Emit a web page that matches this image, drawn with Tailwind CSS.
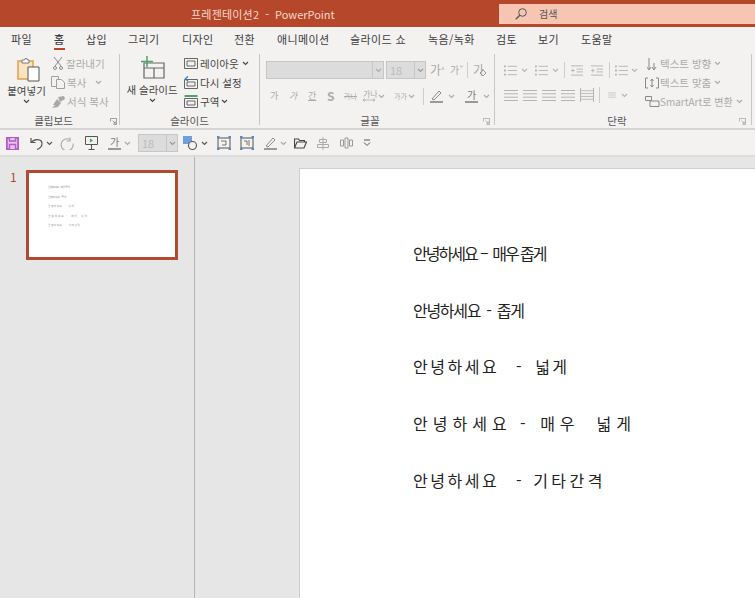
<!DOCTYPE html>
<html lang="ko">
<head>
    <meta charset="UTF-8">
    <title>프레젠테이션2 - PowerPoint</title>
    <script src="https://cdn.jsdelivr.net/npm/@tailwindcss/browser@4"></script>
</head>
<body class="w-[755px] h-[598px] overflow-hidden bg-[#e6e6e6] font-['Noto_Sans_CJK_KR','Noto_Sans',sans-serif] text-[11px] leading-[14px] text-[#444]">

    <!-- shared icons -->
    <svg class="hidden">
        <symbol id="chev" viewBox="0 0 7 5"><path d="M1 1l2.500 2.500L6 1" fill="none" stroke="currentColor" stroke-width="1.100"/></symbol>
        <symbol id="launch" viewBox="0 0 8 8"><path d="M.5 4V.5H7.500V7.500H4M3 3l3 3M6 4v2H4" fill="none" stroke="currentColor" stroke-width=".8"/></symbol>
        <symbol id="bullets" viewBox="0 0 14 13"><path d="M4 2h10M4 6.500h10M4 11h10" stroke="currentColor" fill="none"/><path d="M0 1h2v2H0zM0 5.500h2v2H0zM0 10h2v2H0z" fill="currentColor"/></symbol>
        <symbol id="lines" viewBox="0 0 14 11"><path d="M0 .5h14M0 3.800h14M0 7.200h14M0 10.500h14" stroke="currentColor" fill="none"/></symbol>
        <symbol id="indent" viewBox="0 0 13 11"><path d="M0 .5h13M6 4h7M6 7h7M0 10.500h13M0 5.500h4M2 3.500v4" stroke="currentColor" fill="none"/></symbol>
    </svg>

    <!-- title bar -->
    <div class="h-[27px] bg-[#b7472a] flex items-center">
        <div class="ml-[191px] w-[308px] text-[#f6d9cd] flex"><span class="tracking-[.2px]">프레젠테이션2</span><span class="ml-[6px]">-</span><span class="ml-[6px]">PowerPoint</span></div>
        <div class="w-[256px] h-[20px] bg-[#f6c6b3] flex items-center">
            <svg class="ml-[16px] w-[12px] h-[12px] text-[#555]" viewBox="0 0 12 12" fill="none" stroke="currentColor"><circle cx="7.500" cy="4.500" r="3.800"/><path d="M4.800 7.200L.8 11.200" stroke-width="1.300"/></svg>
            <span class="ml-[12px] text-[10px] text-[#555]">검색</span>
        </div>
    </div>

    <!-- tabs -->
    <div class="h-[27px] bg-[#f3f2f1] flex items-start pt-[5px] text-[#3d3d3d] tracking-[.4px]">
        <span class="ml-[11px] w-[43px]">파일</span>
        <span class="w-[32px] font-medium"><span class="inline-block w-[11px] h-[18px] border-b-2 border-[#b7472a]">홈</span></span>
        <span class="w-[42px]">삽입</span>
        <span class="w-[54px]">그리기</span>
        <span class="w-[52px]">디자인</span>
        <span class="w-[43px]">전환</span>
        <span class="w-[73px]">애니메이션</span>
        <span class="w-[78px]">슬라이드 쇼</span>
        <span class="w-[68px]">녹음/녹화</span>
        <span class="w-[42px]">검토</span>
        <span class="w-[43px]">보기</span>
        <span>도움말</span>
    </div>

    <!-- ribbon -->
    <div class="h-[74px] bg-[#f3f2f1] flex items-start">

        <!-- clipboard -->
        <div class="w-[119px] h-full flex flex-col">
            <div class="h-[60px] flex">
                <div class="w-[51px] flex flex-col items-center pl-[3px]">
                    <svg class="mt-[3px] ml-[2px] w-[23px] h-[25px]" viewBox="0 0 23 25"><path d="M1 4h15v18H1z" fill="#f9e3c4" stroke="#e2a04a" stroke-width="1.500"/><path d="M5 3h2.500a1.500 1.500 0 013 0H12v3H5z" fill="#fff" stroke="#777"/><path d="M11 10h11v14H11z" fill="#fff" stroke="#555"/></svg>
                    <span class="mt-[2px] -ml-[1px] whitespace-nowrap text-[10.500px]">붙여넣기</span>
                    <svg class="mt-[1px] -ml-[1px] w-[7px] h-[5px]"><use href="#chev"/></svg>
                </div>
                <div class="flex flex-col text-[#aaa] text-[10.500px]">
                    <div class="h-[19px] flex items-center">
                        <svg class="ml-[2px] w-[10px] h-[13px]" viewBox="0 0 10 13" fill="none" stroke="#8a8a8a"><path d="M1 0l7 9M9 0L2 9"/><circle cx="2" cy="11" r="1.500"/><circle cx="8" cy="11" r="1.500"/></svg>
                        <span class="ml-[3px]">잘라내기</span>
                    </div>
                    <div class="h-[19px] flex items-center">
                        <svg class="w-[14px] h-[13px]" viewBox="0 0 14 13" fill="#f3f2f1" stroke="#a0a0a0"><path d="M.5.5h7v10h-7z"/><path d="M5.500 3.500h5l3 3v6h-8z"/></svg>
                        <span class="ml-[2px]">복사</span>
                        <svg class="ml-[9px] w-[7px] h-[5px]"><use href="#chev"/></svg>
                    </div>
                    <div class="h-[19px] flex items-center">
                        <svg class="ml-[1px] w-[13px] h-[12px]" viewBox="0 0 13 12" fill="#a8a8a8"><path d="M6 1l6-1 1 3-5 3zM5 3l4 4-3 4-6 1 3-3-2 0z"/></svg>
                        <span class="ml-[2px]">서식 복사</span>
                    </div>
                </div>
            </div>
            <div class="relative h-[14px] text-center pr-[12px] text-[10.500px] text-[#555]">클립보드
                <svg class="absolute right-[2px] top-[4px] w-[7px] h-[7px] text-[#777]"><use href="#launch"/></svg>
            </div>
        </div>
        <div class="w-px h-[71px] bg-[#c8c6c4]"></div>

        <!-- slides -->
        <div class="w-[139px] h-full flex flex-col">
            <div class="h-[60px] flex">
                <div class="w-[64px] flex flex-col items-center">
                    <svg class="mt-[2px] w-[25px] h-[23px]" viewBox="0 0 25 23" fill="none"><path d="M4 7h20v15H4zM4 12h20M14 12v10" stroke="#666" stroke-width="1.200"/><path d="M7 0v11M1 5.500h12" stroke="#4aa564" stroke-width="1.500"/></svg>
                    <span class="mt-[4px] whitespace-nowrap text-[10.500px]">새 슬라이드</span>
                    <svg class="mt-[1px] w-[7px] h-[5px]"><use href="#chev"/></svg>
                </div>
                <div class="flex flex-col text-[10.500px]">
                    <div class="h-[19px] flex items-center">
                        <svg class="w-[14px] h-[11px]" viewBox="0 0 14 11" fill="none" stroke="#666"><path d="M.5.5h13v10H.5zM3 3h8v5H3z"/></svg>
                        <span class="ml-[2px]">레이아웃</span>
                        <svg class="ml-[3px] w-[7px] h-[5px]"><use href="#chev"/></svg>
                    </div>
                    <div class="h-[19px] flex items-center">
                        <svg class="w-[14px] h-[13px]" viewBox="0 0 14 13" fill="none"><path d="M.5 3.500h13v9H.5zM3 6h8v4H3z" stroke="#666"/><path d="M1 3l3-2.500M1 3l3 2" stroke="#2b79c2" stroke-width="1.200"/></svg>
                        <span class="ml-[2px]">다시 설정</span>
                    </div>
                    <div class="h-[19px] flex items-center">
                        <svg class="w-[14px] h-[13px]" viewBox="0 0 14 13" fill="none"><path d="M.5 1h13" stroke="#4aa564" stroke-width="2"/><path d="M.5 3.500h13v9H.5zM3 6h8v4H3z" stroke="#666"/></svg>
                        <span class="ml-[2px]">구역</span>
                        <svg class="ml-[2px] w-[7px] h-[5px]"><use href="#chev"/></svg>
                    </div>
                </div>
            </div>
            <div class="h-[14px] text-center text-[10.500px] text-[#555]">슬라이드</div>
        </div>
        <div class="w-px h-[71px] bg-[#c8c6c4]"></div>

        <!-- font -->
        <div class="w-[234px] h-full flex flex-col">
            <div class="h-[60px] text-[#aaa] pl-[6px]">
                <div class="mt-[7px] h-[18px] flex items-center">
                    <div class="w-[118px] h-[18px] bg-[#dcdcdc] border border-[#c6c6c6] flex justify-end">
                        <div class="w-[11px] border-l border-[#c6c6c6] flex items-center justify-center"><svg class="w-[7px] h-[5px]"><use href="#chev"/></svg></div>
                    </div>
                    <div class="ml-[2px] w-[40px] h-[18px] bg-[#dcdcdc] border border-[#c6c6c6] flex items-center justify-between pl-[3px] text-[#bbb]">18
                        <div class="w-[11px] h-full border-l border-[#c6c6c6] flex items-center justify-center"><svg class="w-[7px] h-[5px] text-[#999]"><use href="#chev"/></svg></div>
                    </div>
                    <span class="ml-[4px] w-[20px] text-[12px]">가<sup class="text-[7px]">^</sup></span>
                    <span class="w-[17px] text-[10px]">가<sup class="text-[7px]">ˇ</sup></span>
                    <div class="w-px h-[16px] bg-[#ccc]"></div>
                    <span class="ml-[5px] text-[12px]">가</span>
                    <svg class="-ml-[5px] mt-[6px] w-[8px] h-[8px]" viewBox="0 0 8 8" fill="none" stroke="#999"><path d="M1 4l3-3 3 3-3 3z"/></svg>
                </div>
                <div class="mt-[8px] h-[18px] flex items-center text-[9px]">
                    <span class="ml-[4px] w-[19px]">가</span>
                    <span class="w-[19px] italic">가</span>
                    <span class="w-[19px] underline">간</span>
                    <span class="w-[17px] text-[12px] font-bold">S</span>
                    <span class="w-[19px] text-[7px] line-through">가나</span>
                    <div class="w-[15px] flex flex-col">
                        <span class="text-[8px] leading-[8px]">가나</span>
                        <svg class="w-[12px] h-[4px]" viewBox="0 0 12 4" fill="none" stroke="#aaa" stroke-width=".8"><path d="M0 2h12M2 .5L0 2l2 1.500M10 .5L12 2l-2 1.500"/></svg>
                    </div>
                    <svg class="mr-[9px] w-[7px] h-[5px]"><use href="#chev"/></svg>
                    <span class="w-[14px] text-[7px]">가가</span>
                    <svg class="w-[7px] h-[5px]"><use href="#chev"/></svg>
                    <div class="ml-[8px] w-px h-[17px] bg-[#ccc]"></div>
                    <svg class="ml-[6px] w-[13px] h-[13px]" viewBox="0 0 13 13" fill="none"><path d="M2 9l7-8 2 2-7 7z" stroke="#8a8a8a"/><path d="M0 12h13" stroke="#9a9a9a" stroke-width="2"/></svg>
                    <svg class="ml-[5px] w-[7px] h-[5px]"><use href="#chev"/></svg>
                    <div class="ml-[10px] w-[13px] h-[14px] border-b-2 border-[#999] text-center text-[10px] leading-[12px] text-[#777]">가</div>
                    <svg class="ml-[5px] w-[7px] h-[5px]"><use href="#chev"/></svg>
                </div>
            </div>
            <div class="relative h-[14px] text-center pr-[14px] text-[10.500px] text-[#555]">글꼴
                <svg class="absolute right-[4px] top-[4px] w-[7px] h-[7px] text-[#999]"><use href="#launch"/></svg>
            </div>
        </div>
        <div class="w-px h-[71px] bg-[#c8c6c4]"></div>

        <!-- paragraph -->
        <div class="w-[256px] h-full flex flex-col">
            <div class="h-[60px] flex text-[#b4b4b4]">
                <div class="w-[150px] pl-[9px]">
                    <div class="mt-[7px] h-[18px] flex items-center">
                        <svg class="w-[13px] h-[13px]"><use href="#bullets"/></svg>
                        <svg class="ml-[4px] w-[7px] h-[5px]"><use href="#chev"/></svg>
                        <svg class="ml-[7px] w-[13px] h-[13px]"><use href="#bullets"/></svg>
                        <svg class="ml-[4px] w-[7px] h-[5px]"><use href="#chev"/></svg>
                        <div class="ml-[5px] w-px h-[16px] bg-[#ccc]"></div>
                        <svg class="ml-[6px] w-[12px] h-[11px]"><use href="#indent"/></svg>
                        <svg class="ml-[8px] w-[12px] h-[11px]"><use href="#indent"/></svg>
                        <div class="ml-[6px] w-px h-[16px] bg-[#ccc]"></div>
                        <svg class="ml-[5px] w-[13px] h-[13px]"><use href="#bullets"/></svg>
                        <svg class="ml-[3px] w-[7px] h-[5px]"><use href="#chev"/></svg>
                    </div>
                    <div class="mt-[7px] h-[18px] flex items-center">
                        <svg class="w-[14px] h-[11px]"><use href="#lines"/></svg>
                        <svg class="ml-[5px] w-[14px] h-[11px]"><use href="#lines"/></svg>
                        <svg class="ml-[5px] w-[14px] h-[11px]"><use href="#lines"/></svg>
                        <svg class="ml-[5px] w-[14px] h-[11px]"><use href="#lines"/></svg>
                        <svg class="ml-[5px] w-[14px] h-[14px] border-x border-[#b4b4b4]"><use href="#lines"/></svg>
                        <div class="ml-[5px] w-px h-[16px] bg-[#ccc]"></div>
                        <svg class="ml-[6px] w-[12px] h-[6px]"><use href="#lines"/></svg>
                        <svg class="ml-[3px] w-[7px] h-[5px]"><use href="#chev"/></svg>
                    </div>
                </div>
                <div class="flex flex-col text-[10.500px] text-[#aaa]">
                    <div class="h-[19px] flex items-center">
                        <svg class="ml-[2px] w-[11px] h-[14px]" viewBox="0 0 11 14" fill="none" stroke="#888"><path d="M2 1v11M0 10l2 3 2-3M7 6v6M5 10l2 3 2-3"/></svg>
                        <span class="ml-[2px]">텍스트 방향</span>
                        <svg class="ml-[3px] w-[7px] h-[5px]"><use href="#chev"/></svg>
                    </div>
                    <div class="h-[19px] flex items-center">
                        <svg class="w-[14px] h-[12px]" viewBox="0 0 14 12" fill="none" stroke="#888"><path d="M3 1H.5v10H3M11 1h2.500v10H11M7 2v8M5.500 4L7 2l1.500 2M5.500 8L7 10l1.500-2"/></svg>
                        <span class="ml-[1px]">텍스트 맞춤</span>
                        <svg class="ml-[3px] w-[7px] h-[5px]"><use href="#chev"/></svg>
                    </div>
                    <div class="h-[19px] flex items-center">
                        <svg class="w-[15px] h-[11px]" viewBox="0 0 15 11" fill="none" stroke="#888"><path d="M.5.5h6v4h-6zM5 5h9v5.500H5z"/></svg>
                        <span class="whitespace-nowrap text-[10px]">SmartArt로 변환</span>
                        <svg class="ml-[3px] w-[7px] h-[5px]"><use href="#chev"/></svg>
                    </div>
                </div>
            </div>
            <div class="relative h-[14px] text-center pr-[12px] text-[10.500px] text-[#555]">단락
                <svg class="absolute right-[5px] top-[4px] w-[7px] h-[7px] text-[#999]"><use href="#launch"/></svg>
            </div>
        </div>
        <div class="w-px h-[71px] bg-[#c8c6c4]"></div>
    </div>

    <!-- quick access -->
    <div class="h-[29px] bg-[#f3f2f1] border-t-2 border-[#d4d4d4] border-b-2 border-b-[#dcdcdc] pt-px flex items-center text-[#aaa]">
        <svg class="ml-[6px] w-[13px] h-[13px]" viewBox="0 0 13 13" fill="#e4c3ec" stroke="#b35ec6" stroke-width="1.800"><path d="M.9.9h11.200v11.200H.9z"/><path d="M3.500 1v3h6V1M3.500 12V7.500h6V12" stroke-width="1.400"/></svg>
        <svg class="ml-[11px] w-[13px] h-[13px] text-[#555]" viewBox="0 0 13 13" fill="none" stroke="currentColor" stroke-width="1.200"><path d="M1 1v4.500h4.500M1.500 5.500C4 1.500 12 1.500 12 6.500c0 3-2.500 5-5 6"/></svg>
        <svg class="ml-[3px] w-[7px] h-[5px] text-[#555]"><use href="#chev"/></svg>
        <svg class="ml-[7px] w-[14px] h-[14px]" viewBox="0 0 14 14" fill="none" stroke="#aaa" stroke-width="1.100"><path d="M10 1.500v3.500H6.500M10 3.500A6 6 0 1 0 13 7.500"/></svg>
        <svg class="ml-[11px] w-[13px] h-[14px]" viewBox="0 0 13 14" fill="none" stroke="#555"><path d="M.5.5h12v8H.5zM6.500 8.500V13M3.500 13.500h6"/><path d="M5 2.500l3 2-3 2z" fill="#39a35c" stroke="none"/></svg>
        <div class="ml-[10px] w-[13px] h-[14px] border-b-2 border-[#999] text-center text-[10px] leading-[12px] text-[#777]">가</div>
        <svg class="ml-[3px] w-[7px] h-[5px]"><use href="#chev"/></svg>
        <div class="ml-[7px] w-[40px] h-[18px] bg-[#dcdcdc] border border-[#c6c6c6] flex items-center justify-between pl-[3px] text-[#bbb]">18
            <div class="w-[11px] h-full border-l border-[#c6c6c6] flex items-center justify-center"><svg class="w-[7px] h-[5px] text-[#999]"><use href="#chev"/></svg></div>
        </div>
        <svg class="ml-[5px] w-[15px] h-[15px]" viewBox="0 0 15 15"><path d="M0 0h9v8H0z" fill="#6f9fdc"/><circle cx="9.500" cy="9.500" r="4" fill="#f3f2f1" stroke="#555" stroke-width="1.100"/></svg>
        <svg class="ml-[3px] w-[7px] h-[5px] text-[#555]"><use href="#chev"/></svg>
        <svg class="ml-[9px] w-[14px] h-[14px]" viewBox="0 0 14 14" fill="none"><path d="M1 2h12v10H1z" stroke="#555"/><path d="M0 1h2.500M11.500 1H14M0 13h2.500M11.500 13H14" stroke="#4b8fd0" stroke-width="2"/><path d="M4 5h5v4M9 9H5" stroke="#555" stroke-width=".8"/></svg>
        <svg class="ml-[9px] w-[14px] h-[14px]" viewBox="0 0 14 14" fill="none"><path d="M1 2h12v10H1z" stroke="#555"/><path d="M0 1h2.500M11.500 1H14M0 13h2.500M11.500 13H14" stroke="#4b8fd0" stroke-width="2"/><path d="M4 5h3v4M9 4v6" stroke="#555" stroke-width=".8"/></svg>
        <svg class="ml-[10px] w-[13px] h-[13px]" viewBox="0 0 13 13" fill="none"><path d="M2 9l7-8 2 2-7 7z" stroke="#8a8a8a"/><path d="M0 12h13" stroke="#9a9a9a" stroke-width="2"/></svg>
        <svg class="ml-[3px] w-[7px] h-[5px]"><use href="#chev"/></svg>
        <svg class="ml-[7px] w-[13px] h-[11px]" viewBox="0 0 13 11" fill="none" stroke="#444" stroke-width="1.100"><path d="M.5 10V1h4l1 1.500h5V4M.5 10h9.500L12.500 4H3z"/></svg>
        <svg class="ml-[10px] w-[12px] h-[13px]" viewBox="0 0 12 13" fill="none" stroke="#aaa"><path d="M6 0v13M2.500 2.500h7v3h-7zM.5 7.500h11v3H.5z"/></svg>
        <svg class="ml-[11px] w-[13px] h-[12px]" viewBox="0 0 13 12" fill="none" stroke="#999"><path d="M.5 3h3v6h-3zM5 1h3v10H5zM9.500 3h3v6h-3z"/></svg>
        <svg class="ml-[10px] w-[8px] h-[8px] text-[#555]" viewBox="0 0 8 8" fill="none" stroke="currentColor"><path d="M1 1h6M1 3.500l3 3 3-3"/></svg>
    </div>

    <!-- work area -->
    <div class="flex h-[441px]">
        <aside class="w-[195px] border-r border-[#b5b5b5] pt-[13px] flex items-start">
            <span class="ml-[10px] w-[16px] text-[12px] text-[#b7472a]">1</span>
            <div class="w-[152px] h-[90px] bg-white border-[3px] border-[#b04a30] pl-[19px] pt-[13px] flex flex-col gap-[6.500px] text-[2.700px] leading-[3px] text-[#999] whitespace-pre">
                <span class="tracking-[-.34px]">안녕하세요 – 매우 좁게</span>
                <span class="tracking-[-.17px]">안녕하세요 - 좁게</span>
                <span class="tracking-[.43px]">안녕하세요  -  넓게</span>
                <span class="tracking-[.85px]">안녕하세요 -  매우  넓게</span>
                <span class="tracking-[.43px]">안녕하세요  -  기타간격</span>
            </div>
        </aside>
        <main class="ml-[104px] mt-[11px] flex-1 bg-white border-l border-t border-[#cfcfcf] pl-[113px] pt-[72px] flex flex-col gap-[32.700px] text-[16px] leading-[24px] text-[#222] whitespace-pre">
            <span class="tracking-[-2px]">안녕하세요 <span class="ml-[1px]">–</span> <span class="ml-[3px]">매우 좁게</span></span>
            <span class="tracking-[-1.300px] [word-spacing:3px]">안녕하세요 - 좁게</span>
            <span class="tracking-[2.500px]">안녕하세요  <span class="ml-[3px]">-</span> <span class="ml-[4px]">넓게</span></span>
            <span class="tracking-[5px] [word-spacing:-1px]">안녕하세요 - <span class="ml-[1px]">매우  넓게</span></span>
            <span class="tracking-[2.500px]">안녕하세요  <span class="ml-[3px]">-</span> <span class="ml-[2px] tracking-[3.500px]">기타간격</span></span>
        </main>
    </div>
</body>
</html>
